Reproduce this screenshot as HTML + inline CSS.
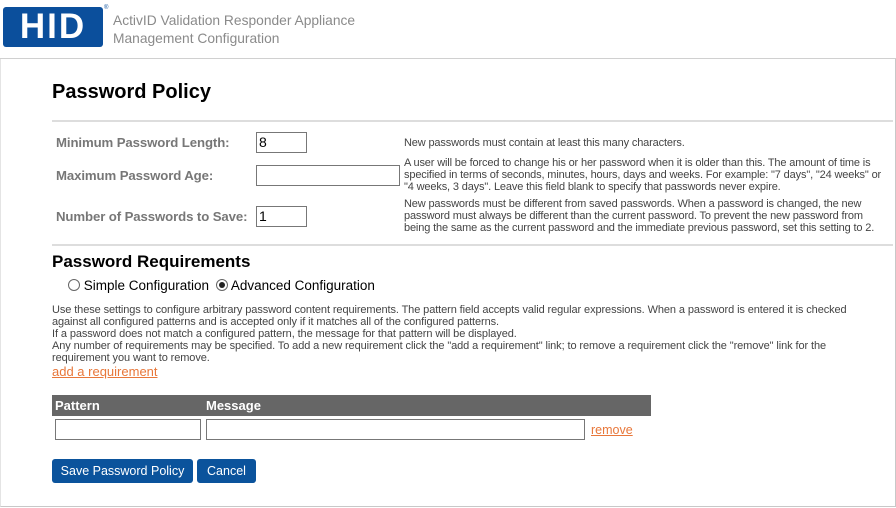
<!DOCTYPE html>
<html><head><meta charset="utf-8"><style>
*{margin:0;padding:0;box-sizing:border-box}
body{width:896px;height:508px;background:#fff;font-family:"Liberation Sans",Arial,sans-serif;position:relative;overflow:hidden}
.a{position:absolute;white-space:nowrap}
.hdrline{position:absolute;left:0;top:58px;width:896px;height:1px;background:#d0d0d0}
.frame{position:absolute;left:0;top:58px;width:896px;height:449px;border:1px solid #c8c8c8;border-left-color:#e4e4e4;border-top:none}
.logo{position:absolute;left:3px;top:7px;width:100px;height:40px;background:#0b4f9c;border-radius:3px;color:#fff;font:bold 35px/40px "Liberation Sans",sans-serif;text-align:center;letter-spacing:2px}
.sub{color:#8a8a8a;font-size:13.8px}
.lab{color:#777;font-weight:bold;font-size:13.2px;letter-spacing:-0.1px}
.inp{position:absolute;border:1px solid #777;height:21px;font-size:14px;padding-left:2px;line-height:19px;color:#000;background:#fff}
.help{position:absolute;left:404px;font-size:11px;color:#444;line-height:12px;white-space:nowrap;letter-spacing:-0.15px}
.hr{position:absolute;left:52px;width:841px;height:2px;background:#ddd}
.p{font-size:11px;color:#444;line-height:12px;letter-spacing:-0.1px}
.btn{position:absolute;top:459px;height:24px;background:#0b539c;color:#fff;font-size:12.5px;line-height:24px;text-align:center;border-radius:3px}
.radio{display:inline-block;width:12px;height:12px;border:1px solid #666;border-radius:50%;vertical-align:-1px;position:relative}
</style></head><body>
<div class="frame"></div>
<div class="hdrline"></div>
<div class="logo">HID</div>
<div class="a" style="left:104px;top:5px;font-size:6px;color:#0b4f9c">®</div>
<div class="a sub" style="left:113px;top:13px">ActivID Validation Responder Appliance</div>
<div class="a sub" style="left:113px;top:31px">Management Configuration</div>

<div class="a" style="left:52px;top:81px;font-size:20px;font-weight:bold;color:#000">Password Policy</div>
<div class="hr" style="top:120px"></div>

<div class="a lab" style="left:56px;top:135px">Minimum Password Length:</div>
<div class="inp" style="left:256px;top:132px;width:51px">8</div>
<div class="a lab" style="left:56px;top:168px">Maximum Password Age:</div>
<div class="inp" style="left:256px;top:165px;width:144px"></div>
<div class="a lab" style="left:56px;top:209px">Number of Passwords to Save:</div>
<div class="inp" style="left:256px;top:206px;width:51px">1</div>

<div class="help" style="top:137px">New passwords must contain at least this many characters.</div>
<div class="help" style="top:157px">A user will be forced to change his or her password when it is older than this. The amount of time is<br>specified in terms of seconds, minutes, hours, days and weeks. For example: "7 days", "24 weeks" or<br>"4 weeks, 3 days". Leave this field blank to specify that passwords never expire.</div>
<div class="help" style="top:198px">New passwords must be different from saved passwords. When a password is changed, the new<br>password must always be different than the current password. To prevent the new password from<br>being the same as the current password and the immediate previous password, set this setting to 2.</div>

<div class="hr" style="top:244px"></div>
<div class="a" style="left:52px;top:252px;font-size:17px;font-weight:bold;color:#000">Password Requirements</div>
<div class="a" style="left:68px;top:278px;font-size:13.5px;color:#000"><span class="radio"></span> Simple Configuration <span class="radio" style="margin-left:3px"><span style="position:absolute;left:2px;top:2px;width:6px;height:6px;border-radius:50%;background:#222"></span></span> Advanced Configuration</div>

<div class="a p" style="left:52px;top:304px">Use these settings to configure arbitrary password content requirements. The pattern field accepts valid regular expressions. When a password is entered it is checked<br>against all configured patterns and is accepted only if it matches all of the configured patterns.<br>If a password does not match a configured pattern, the message for that pattern will be displayed.<br>Any number of requirements may be specified. To add a new requirement click the "add a requirement" link; to remove a requirement click the "remove" link for the<br>requirement you want to remove.</div>
<div class="a" style="left:52px;top:364px;font-size:13px;color:#e8773a;text-decoration:underline">add a requirement</div>

<div class="a" style="left:52px;top:395px;width:599px;height:21px;background:#666"></div>
<div class="a" style="left:55px;top:398px;font-size:13px;font-weight:bold;color:#fff">Pattern</div>
<div class="a" style="left:206px;top:398px;font-size:13px;font-weight:bold;color:#fff">Message</div>
<div class="inp" style="left:55px;top:419px;width:146px"></div>
<div class="inp" style="left:206px;top:419px;width:379px"></div>
<div class="a" style="left:591px;top:423px;font-size:12.5px;color:#e8773a;text-decoration:underline">remove</div>

<div class="btn" style="left:52px;width:141px">Save Password Policy</div>
<div class="btn" style="left:197px;width:59px">Cancel</div>
</body></html>
